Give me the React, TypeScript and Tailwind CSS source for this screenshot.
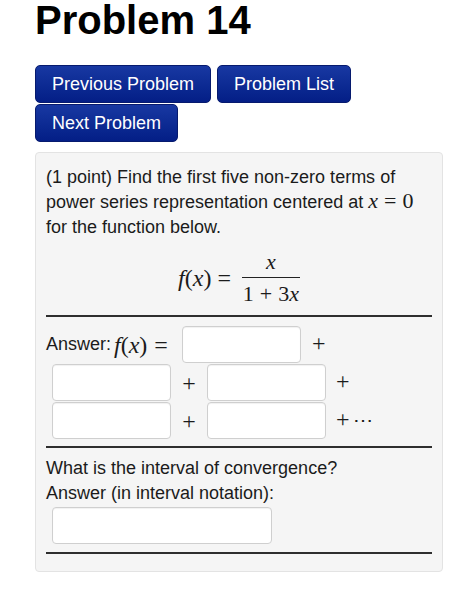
function NavButton({ label }: { label: string }) {
  return (
    <button className="flex h-[38px] items-center rounded-[5px] border border-[#061a6e] bg-gradient-to-b from-[#1838a2] to-[#041e86] px-[16px] text-[18px] leading-none text-white">
      {label}
    </button>
  );
}

function AnswerBox({ width }: { width: string }) {
  return (
    <div
      className={`h-[37px] shrink-0 rounded-[4px] border border-[#cfcfcf] bg-white shadow-[inset_0_1px_1px_rgba(0,0,0,0.06)] ${width}`}
    />
  );
}

const serif = "font-['Liberation_Serif','Times_New_Roman',serif]";

function Plus({ dots }: { dots?: boolean }) {
  return (
    <span className={`${serif} text-[24px] leading-none`}>
      +{dots && <span className="ml-[3px] text-[20px]">⋯</span>}
    </span>
  );
}

export default function App() {
  return (
    <div className="min-h-screen bg-white px-[35px] font-['Liberation_Sans',Arial,sans-serif] text-[#1b1b1b]">
      <h1 className="text-[40px] font-bold leading-[40px] text-black">Problem 14</h1>

      {/* Navigation */}
      <div className="mt-[25px] flex flex-col gap-[1px]">
        <div className="flex gap-[6px]">
          <NavButton label="Previous Problem" />
          <NavButton label="Problem List" />
        </div>
        <div className="flex">
          <NavButton label="Next Problem" />
        </div>
      </div>

      {/* Problem well */}
      <div className="mt-[10px] w-[408px] rounded-[4px] border border-[#e3e3e3] bg-[#f5f5f5] px-[10px] pt-[12px] pb-[17px]">
        <p className="text-[18px] leading-[25px]">
          (1 point) Find the first five non-zero terms of power series representation centered at{" "}
          <span className={`${serif} text-[22px] leading-none`}>
            <i>x</i>
            <span className="mx-[6px]">=</span>0
          </span>{" "}
          for the function below.
        </p>

        <div className={`${serif} mt-[11px] flex items-center justify-center text-[22px]`}>
          <span className="text-[24px] leading-[22px]">
            <i>f</i>(<i>x</i>)
          </span>
          <span className="mr-[11px] ml-[6px] text-[24px] leading-[22px]">=</span>
          <span className="flex flex-col items-center">
            <span className="leading-[22px]">
              <i>x</i>
            </span>
            <span className="mt-[4px] h-px w-[58px] bg-[#222]" />
            <span className="mt-[5px] leading-[22px]">
              1<span className="mx-[6px]">+</span>3<i>x</i>
            </span>
          </span>
        </div>

        <div className="mt-[10px] h-[2px] bg-[#2e2e2e]" />

        {/* Series answer */}
        <div className="mt-[9px] flex flex-col gap-[1px]">
          <div className="flex items-center">
            <span className="flex w-[136px] items-center text-[18px]">
              Answer:
              <span className={`${serif} ml-[3px] text-[24px]`}>
                <i>f</i>(<i>x</i>)<span className="ml-[7px]">=</span>
              </span>
            </span>
            <AnswerBox width="w-[119px]" />
            <span className="ml-[11px]">
              <Plus />
            </span>
          </div>
          {[false, true].map((last, i) => (
            <div key={i} className="flex items-center pl-[6px]">
              <AnswerBox width="w-[119px]" />
              <span className="flex w-[36px] justify-center">
                <Plus />
              </span>
              <AnswerBox width="w-[119px]" />
              <span className="ml-[10px]">
                <Plus dots={last} />
              </span>
            </div>
          ))}
        </div>

        <div className="mt-[7px] h-[2px] bg-[#2e2e2e]" />

        {/* Interval */}
        <p className="mt-[8px] text-[18px] leading-[25px]">What is the interval of convergence?</p>
        <p className="text-[18px] leading-[25px]">Answer (in interval notation):</p>
        <div className="mt-[1px] pl-[6px]">
          <AnswerBox width="w-[220px]" />
        </div>

        <div className="mt-[8px] h-[2px] bg-[#2e2e2e]" />
      </div>
    </div>
  );
}
